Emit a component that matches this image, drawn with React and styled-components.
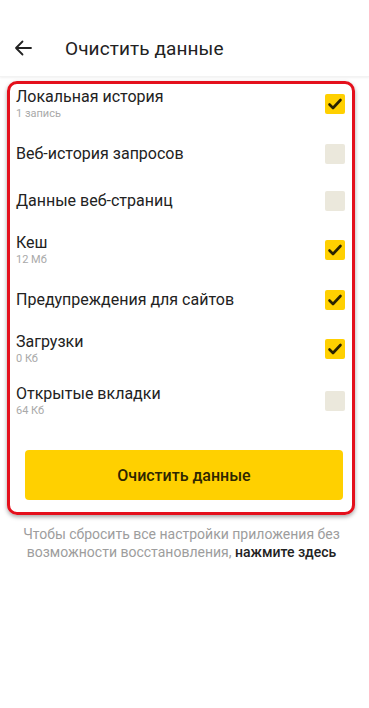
import React from "react";
import styled, { createGlobalStyle } from "styled-components";

const Global = createGlobalStyle`
  html, body { margin: 0; padding: 0; background: #fff; }
  body { font-family: Roboto, "Noto Sans", sans-serif; color: #222; }
  * { box-sizing: border-box; }
`;

const Page = styled.div`
  width: 369px;
  min-height: 708px;
  background: #fff;
`;

const Header = styled.header`
  height: 77px;
  display: flex;
  align-items: center;
  padding: 20px 0 0 14px;
  box-shadow: 0 1px 2px rgba(0, 0, 0, 0.06);
  border-bottom: 1px solid #f3f3f3;
`;

const BackButton = styled.button`
  border: 0;
  background: none;
  padding: 0;
  width: 18px;
  height: 18px;
  display: flex;
  align-items: center;
  justify-content: center;
  cursor: pointer;
`;

const Title = styled.h1`
  margin: 0 0 0 33px;
  font-size: 19px;
  font-weight: 400;
  color: #222;
  letter-spacing: 0.1px;
`;

const Frame = styled.section`
  margin: 4px 14px 0 7px;
  border: 3px solid #e4101c;
  border-radius: 10px;
  box-shadow: 0 2px 4px rgba(0, 0, 0, 0.35);
  padding: 0 7px 12px 6px;
`;

const List = styled.div`
  margin-top: -6px;
  display: flex;
  flex-direction: column;
`;

const Row = styled.label`
  display: flex;
  align-items: center;
  justify-content: space-between;
  height: ${(p) => (p.$double ? "52px" : "47px")};
`;

const Texts = styled.div`
  display: flex;
  flex-direction: column;
`;

const Label = styled.span`
  font-size: 16px;
  line-height: 20px;
  color: #222;
`;

const Sub = styled.span`
  font-size: 11px;
  line-height: 14px;
  color: #a9a9a9;
`;

const Box = styled.span`
  width: 20px;
  height: 20px;
  border-radius: 2px;
  background: ${(p) => (p.$checked ? "#ffd000" : "#ebe8dc")};
  display: flex;
  align-items: center;
  justify-content: center;
`;

const ClearButton = styled.button`
  display: block;
  margin: 23px 0 0 9px;
  width: calc(100% - 11px);
  height: 50px;
  border: 0;
  border-radius: 4px;
  background: #ffd000;
  font-family: Roboto, "Noto Sans", sans-serif;
  font-size: 16px;
  font-weight: 500;
  color: #2e2600;
  cursor: pointer;
`;

const Footer = styled.p`
  margin: 10px 0 0;
  padding: 0 14px 0 8px;
  text-align: center;
  font-size: 14px;
  line-height: 18px;
  color: #9d9d9d;
`;

const Link = styled.span`
  color: #222;
  font-weight: 500;
`;

const Check = () => (
  <svg width="16" height="14" viewBox="0 0 16 14" fill="none">
    <path d="M2.5 7.5 L6 11 L13.5 3" stroke="#2a2200" strokeWidth="2.6" strokeLinecap="round" strokeLinejoin="round" />
  </svg>
);

const items = [
  { label: "Локальная история", sub: "1 запись", checked: true },
  { label: "Веб-история запросов", checked: false },
  { label: "Данные веб-страниц", checked: false },
  { label: "Кеш", sub: "12 Мб", checked: true },
  { label: "Предупреждения для сайтов", checked: true },
  { label: "Загрузки", sub: "0 Кб", checked: true },
  { label: "Открытые вкладки", sub: "64 Кб", checked: false },
];

export default function App() {
  return (
    <Page>
      <Global />
      <Header>
        <BackButton aria-label="Назад">
          <svg width="18" height="16" viewBox="0 0 18 16" fill="none">
            <path d="M17 8 H2 M8.5 1.5 L2 8 L8.5 14.5" stroke="#222" strokeWidth="1.8" strokeLinecap="round" strokeLinejoin="round" />
          </svg>
        </BackButton>
        <Title>Очистить данные</Title>
      </Header>
      <Frame>
        <List>
          {items.map((it) => (
            <Row key={it.label} $double={!!it.sub}>
              <Texts>
                <Label>{it.label}</Label>
                {it.sub && <Sub>{it.sub}</Sub>}
              </Texts>
              <Box $checked={it.checked}>{it.checked && <Check />}</Box>
            </Row>
          ))}
        </List>
        <ClearButton>Очистить данные</ClearButton>
      </Frame>
      <Footer>
        Чтобы сбросить все настройки приложения без возможности восстановления, <Link>нажмите здесь</Link>
      </Footer>
    </Page>
  );
}
